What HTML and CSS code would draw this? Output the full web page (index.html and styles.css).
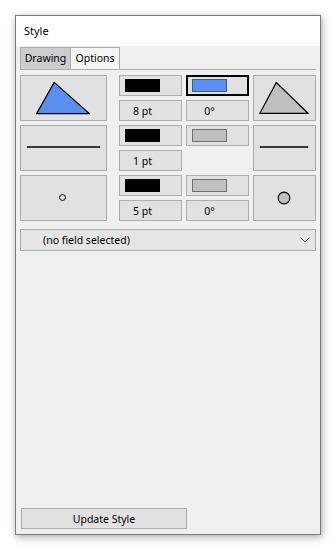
FILE: index.html
```html
<!DOCTYPE html>
<html lang="en">
  <head>
    <meta charset="UTF-8" />
    <meta name="viewport" content="width=device-width, initial-scale=1.0" />
    <title>Style</title>
    <link rel="stylesheet" href="styles.css">
  </head>
  <body>
    <div class="window">
      <div class="title-bar">Style</div>
      <div class="panel">
        <div class="tabs">
          <div class="tab active">Drawing</div>
          <div class="tab">Options</div>
        </div>
        <div class="style-grid">
          <!-- fill row -->
          <div class="btn big left-big">
            <svg width="87" height="44" viewBox="0 0 87 44">
              <polygon points="34,6 16,38 70,38" fill="#5a8ef0" stroke="#000" stroke-width="1.3" stroke-linejoin="round" />
            </svg>
          </div>
          <div class="btn swatch-btn"><span class="swatch black"></span></div>
          <div class="btn swatch-btn selected"><span class="swatch blue"></span></div>
          <div class="btn big right-big">
            <svg width="63" height="44" viewBox="0 0 63 44">
              <polygon points="23,6 6,38 56,38" fill="#c0c0c0" stroke="#000" stroke-width="1.3" stroke-linejoin="round" />
            </svg>
          </div>
          <div class="btn label">8 pt</div>
          <div class="btn label">0°</div>

          <!-- line row -->
          <div class="btn big left-big">
            <svg width="87" height="44" viewBox="0 0 87 44">
              <line x1="6" y1="21" x2="81" y2="21" stroke="#000" stroke-width="1.4" />
            </svg>
          </div>
          <div class="btn swatch-btn"><span class="swatch black"></span></div>
          <div class="btn swatch-btn"><span class="swatch gray"></span></div>
          <div class="btn big right-big">
            <svg width="63" height="44" viewBox="0 0 63 44">
              <line x1="6" y1="21" x2="56" y2="21" stroke="#000" stroke-width="1.4" />
            </svg>
          </div>
          <div class="btn label">1 pt</div>
          <div class="empty"></div>

          <!-- point row -->
          <div class="btn big left-big">
            <svg width="87" height="44" viewBox="0 0 87 44">
              <circle cx="42.5" cy="21.5" r="3" fill="none" stroke="#000" stroke-width="1" />
            </svg>
          </div>
          <div class="btn swatch-btn"><span class="swatch black"></span></div>
          <div class="btn swatch-btn"><span class="swatch gray"></span></div>
          <div class="btn big right-big">
            <svg width="63" height="44" viewBox="0 0 63 44">
              <circle cx="31" cy="22" r="6" fill="#c0c0c0" stroke="#000" stroke-width="1.2" />
            </svg>
          </div>
          <div class="btn label">5 pt</div>
          <div class="btn label">0°</div>
        </div>

        <div class="field-select">
          <span>(no field selected)</span>
          <svg width="10" height="6" viewBox="0 0 10 6">
            <polyline points="0.5,0.5 5,5 9.5,0.5" fill="none" stroke="#555" stroke-width="1" />
          </svg>
        </div>

        <div class="spacer"></div>
        <div class="btn update-btn">Update Style</div>
      </div>
    </div>
  </body>
</html>
```

FILE: styles.css
```css
body {
  margin: 0;
  padding: 15px;
  background: #fff;
  font-family: "Segoe UI", "Noto Sans", sans-serif;
  font-size: 10.5px;
  color: #000;
}
.window {
  width: 304px;
  height: 518px;
  border: 1px solid #7a7a7a;
  background: #f0f0f0;
  display: flex;
  flex-direction: column;
  box-shadow: 1px 2px 8px rgba(0, 0, 0, 0.35);
}
.title-bar {
  background: #fff;
  height: 30px;
  line-height: 30px;
  padding-left: 8px;
  font-size: 11px;
}
.panel {
  flex: 1;
  display: flex;
  flex-direction: column;
  padding: 1px 4px 5px;
}
.tabs {
  display: flex;
  border-bottom: 1px solid #adadad;
  height: 22px;
}
.tab {
  height: 22px;
  line-height: 21px;
  box-sizing: border-box;
  border: 1px solid #adadad;
  border-bottom: none;
  text-align: center;
  width: 50px;
  background: #f5f5f5;
}
.tab.active {
  background: #cdcdcd;
  border-right: none;
}
.style-grid {
  margin-top: 5px;
  display: grid;
  grid-template-columns: 95px 63px 63px 63px;
  grid-auto-rows: 21px;
  gap: 4px;
}
.btn {
  box-sizing: border-box;
  background: #e1e1e1;
  border: 1px solid #adadad;
}
.big {
  grid-row: span 2;
  display: flex;
}
.left-big {
  width: 87px;
  grid-column: 1;
}
.right-big {
  grid-column: 4;
}
.swatch-btn {
  padding: 3px 0 0 5px;
}
.swatch-btn.selected {
  border-color: #000;
  box-shadow: inset 0 0 0 1px #000;
}
.swatch {
  display: block;
  width: 35px;
  height: 13px;
  box-sizing: border-box;
}
.swatch.black {
  background: #000;
}
.swatch.blue {
  background: #5a8ef0;
  border: 1px solid #3d5a8c;
}
.swatch.gray {
  background: #c0c0c0;
  border: 1px solid #707070;
}
.label {
  text-align: center;
  line-height: 20px;
  padding-right: 16px;
}
.field-select {
  margin-top: 8px;
  height: 22px;
  box-sizing: border-box;
  background: #e5e5e5;
  border: 1px solid #adadad;
  display: flex;
  align-items: center;
  justify-content: space-between;
  padding: 0 5px 0 22px;
}
.spacer {
  flex: 1;
}
.update-btn {
  width: 166px;
  height: 21px;
  line-height: 20px;
  text-align: center;
  margin-left: 1px;
}
```
